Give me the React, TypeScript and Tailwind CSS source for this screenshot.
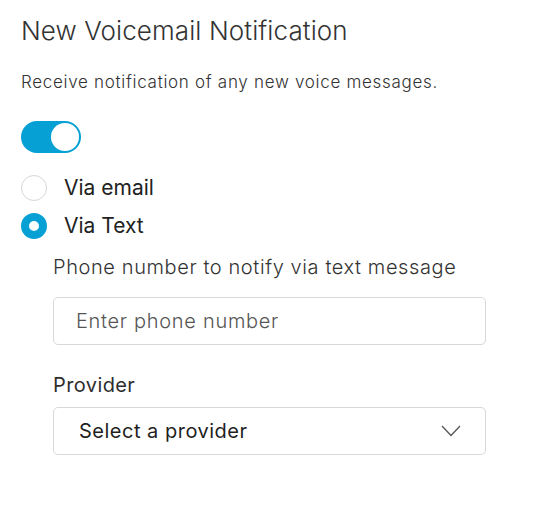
import React from 'react';

export default function App() {
  return (
    <div
      className="w-[546px] h-[512px] bg-white pl-[21px] pt-[15px] text-[#343434]"
      style={{ fontFamily: 'Inter, "Noto Sans", sans-serif' }}
    >
      <h1 className="text-[26px] leading-[32px] font-light tracking-[0.1px] text-[#333]">New Voicemail Notification</h1>
      <p className="mt-[25px] text-[17px] leading-[20px] tracking-[0.7px] font-light text-[#333]">
        Receive notification of any new voice messages.
      </p>

      <button
        type="button"
        className="mt-[29px] flex h-[32px] w-[60px] items-center justify-end rounded-full bg-[#07a0d4] p-[2px]"
      >
        <span className="h-[28px] w-[28px] rounded-full bg-white" />
      </button>

      <div className="mt-[16px] flex flex-col">
        <label className="flex h-[38px] items-center gap-[17px]">
          <span className="h-[26px] w-[26px] rounded-full border border-[#d6d6d6] bg-white" />
          <span className="text-[21px] text-[#222]">Via email</span>
        </label>
        <label className="flex h-[38px] items-center gap-[17px]">
          <span className="h-[26px] w-[26px] rounded-full border-[8px] border-[#07a0d4] bg-white" />
          <span className="text-[21px] text-[#222]">Via Text</span>
        </label>
      </div>

      <div className="ml-[32px] w-[433px]">
        <div className="mt-[10px] text-[20px] leading-[24px] tracking-[0.6px] font-light text-[#333]">
          Phone number to notify via text message
        </div>
        <div className="mt-[18px] flex h-[48px] items-center rounded-[5px] border border-[#d8d8d8] px-[22px]">
          <span className="text-[20px] tracking-[0.7px] font-light text-[#555]">Enter phone number</span>
        </div>

        <div className="mt-[28px] text-[20px] leading-[24px] tracking-[0.4px] text-[#2e2e2e]">Provider</div>
        <div className="mt-[10px] flex h-[48px] items-center justify-between rounded-[5px] border border-[#d8d8d8] pl-[25px] pr-[24px]">
          <span className="text-[20px] tracking-[0.5px] text-[#1f1f1f]">Select a provider</span>
          <svg width="20" height="12" viewBox="0 0 20 12" fill="none">
            <path d="M1 1 L10 10.5 L19 1" stroke="#555" strokeWidth="1.3" />
          </svg>
        </div>
      </div>
    </div>
  );
}
